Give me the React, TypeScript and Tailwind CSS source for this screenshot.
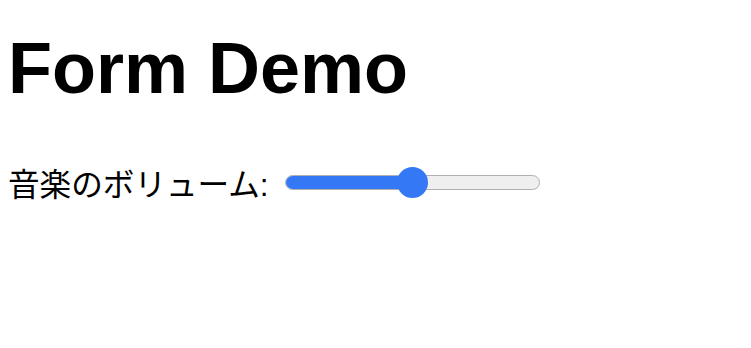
import { useState } from 'react';

const VolumeSlider = ({ value }: { value: number }) => {
  const pct = value / 100;
  return (
    <div className="relative h-[31px] w-[255px]">
      <div className="absolute left-0 right-0 top-[8px] h-[15px] overflow-hidden rounded-full border-[1.5px] border-[#b0b0b0] bg-[#efefef]">
        <div className="h-full bg-[#3478f6]" style={{ width: `${15 + pct * 224}px` }} />
      </div>
      <div
        className="absolute top-0 h-[31px] w-[31px] rounded-full bg-[#3478f6]"
        style={{ left: `${pct * 224}px` }}
      />
    </div>
  );
};

export default function App() {
  const [volume] = useState(50);
  return (
    <div className="min-h-[348px] bg-white px-2 text-black">
      <h1 className="pt-[26px] font-['Liberation_Sans',Arial,sans-serif] text-[72px] font-bold leading-[84px]">
        Form Demo
      </h1>
      <div className="mt-[54px] flex items-center">
        <label className="font-['Liberation_Sans','Noto_Sans_CJK_JP',sans-serif] text-[31.6px] leading-[42px]">
          音楽のボリューム:
        </label>
        <div className="ml-[16px] mt-[-6px]">
          <VolumeSlider value={volume} />
        </div>
      </div>
    </div>
  );
}
